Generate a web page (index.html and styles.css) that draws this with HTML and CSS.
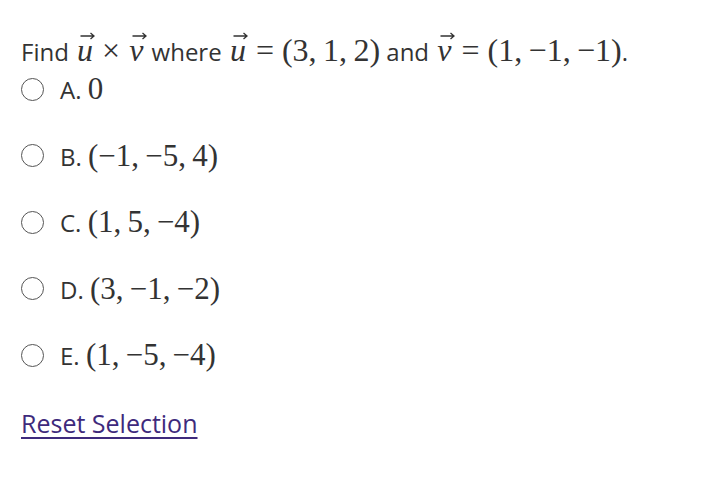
FILE: index.html
```html
<!DOCTYPE html>
<html>
<head>
<meta charset="utf-8">
<link rel="stylesheet" href="styles.css">
</head>
<body>
<div class="quiz">
  <p class="question">Find <span class="vec"><span class="mi">u</span><svg class="arrow" viewBox="0 0 15 8" width="15" height="8"><path d="M0.5 4 H14 M10.5 1 L14 4 L10.5 7" fill="none" stroke="#333" stroke-width="1.3"/></svg></span><span class="bin">×</span><span class="vec"><span class="mi">v</span><svg class="arrow" viewBox="0 0 15 8" width="15" height="8"><path d="M0.5 4 H14 M10.5 1 L14 4 L10.5 7" fill="none" stroke="#333" stroke-width="1.3"/></svg></span> where <span class="vec"><span class="mi">u</span><svg class="arrow" viewBox="0 0 15 8" width="15" height="8"><path d="M0.5 4 H14 M10.5 1 L14 4 L10.5 7" fill="none" stroke="#333" stroke-width="1.3"/></svg></span><span class="rel">=</span><span class="math">(3,&#8201;1,&#8201;2)</span> and <span class="vec"><span class="mi">v</span><svg class="arrow" viewBox="0 0 15 8" width="15" height="8"><path d="M0.5 4 H14 M10.5 1 L14 4 L10.5 7" fill="none" stroke="#333" stroke-width="1.3"/></svg></span><span class="rel">=</span><span class="math">(1,&#8201;−1,&#8201;−1)</span>.</p>
  <div class="options">
    <div class="option"><span class="radio"></span><span class="label">A. <span class="math">0</span></span></div>
    <div class="option"><span class="radio"></span><span class="label">B. <span class="math">(−1,&#8201;−5,&#8201;4)</span></span></div>
    <div class="option"><span class="radio"></span><span class="label">C. <span class="math">(1,&#8201;5,&#8201;−4)</span></span></div>
    <div class="option"><span class="radio"></span><span class="label">D. <span class="math">(3,&#8201;−1,&#8201;−2)</span></span></div>
    <div class="option"><span class="radio"></span><span class="label">E. <span class="math">(1,&#8201;−5,&#8201;−4)</span></span></div>
  </div>
  <a class="reset" href="#">Reset Selection</a>
</div>
</body>
</html>
```
FILE: styles.css
```css
html, body {
  margin: 0;
  padding: 0;
  background: #ffffff;
}
body {
  font-family: "Open Sans", "Noto Sans", sans-serif;
  font-size: 24px;
  color: #333333;
}
.quiz {
  padding: 33px 0 0 21px;
}
.question {
  margin: 0;
  line-height: 34px;
  white-space: nowrap;
}
.math, .mi, .bin, .rel {
  font-family: "Liberation Serif", "DejaVu Serif", serif;
  font-size: 32px;
}
.option .math {
  font-size: 31px;
}
.mi {
  font-style: italic;
  margin: 0 2px;
}
.bin {
  margin: 0 7px;
}
.rel {
  margin: 0 8px;
}
.vec {
  position: relative;
  display: inline-block;
  line-height: 1;
}
.arrow {
  position: absolute;
  left: 5px;
  top: -2px;
}
.options {
  display: flex;
  flex-direction: column;
  gap: 32.5px;
  margin-top: 3px;
}
.option {
  display: flex;
  align-items: center;
  height: 34px;
}
.radio {
  width: 23px;
  height: 23px;
  border: 1px solid #555555;
  border-radius: 50%;
  box-sizing: border-box;
  margin-right: 16px;
  flex: none;
}
.label {
  white-space: nowrap;
}
.reset {
  display: inline-block;
  margin-top: 34px;
  font-size: 25px;
  color: #3e2a7c;
  text-decoration: underline;
  text-underline-offset: 4px;
  line-height: 34px;
}
```
